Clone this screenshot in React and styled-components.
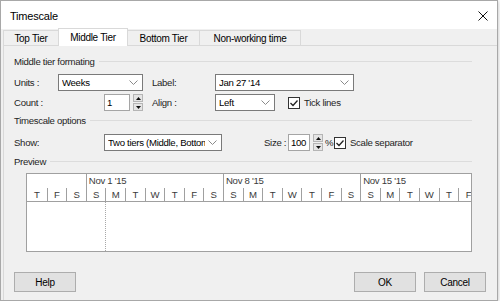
import React from 'react'
import styled, { createGlobalStyle } from 'styled-components'

const GlobalStyle = createGlobalStyle`
  html, body { margin: 0; padding: 0; background: #fff; }
  body {
    font-family: "Liberation Sans", Arial, sans-serif;
    font-size: 9.6px;
    letter-spacing: -0.3px;
    color: #1e1e1e;
  }
  * { box-sizing: border-box; }
`

const Window = styled.div`
  width: 498px;
  height: 301px;
  border: 1px solid #a8a8a8;
  background: #f0f0f0;
  box-shadow: 0 1px 4px rgba(0, 0, 0, 0.28);
  display: flex;
  flex-direction: column;
`

const TitleBar = styled.div`
  height: 28px;
  flex: 0 0 28px;
  background: #fff;
  display: flex;
  align-items: center;
  justify-content: space-between;
  padding: 1px 9px 0 9px;
  font-size: 11px;
  letter-spacing: -0.2px;
  color: #000;
`

const TabStrip = styled.div`
  height: 17px;
  flex: 0 0 17px;
  display: flex;
  align-items: flex-end;
  padding-left: 2px;
  position: relative;
  z-index: 1;
  margin-bottom: -1px;
`

const Tab = styled.div`
  width: ${p => p.$w}px;
  height: ${p => (p.$active ? 18 : 16)}px;
  margin-left: -1px;
  border: 1px solid #d9d9d9;
  border-bottom: ${p => (p.$active ? 'none' : '1px solid #d9d9d9')};
  background: ${p => (p.$active ? '#fff' : '#f0f0f0')};
  color: #000;
  font-size: 10px;
  display: flex;
  align-items: center;
  justify-content: center;
  padding-bottom: ${p => (p.$active ? 1 : 0)}px;
  &:first-child { margin-left: 0; }
`

const Panel = styled.div`
  flex: 1;
  margin-left: 2px;
  border-left: 1px solid #d9d9d9;
  border-top: 1px solid #d9d9d9;
  padding: 0 11px 0 10px;
  display: flex;
  flex-direction: column;
`

const Legend = styled.div`
  height: 12px;
  margin-top: ${p => p.$mt}px;
  margin-right: 14px;
  display: flex;
  align-items: center;
  &::after {
    content: '';
    flex: 1;
    height: 1px;
    background: #dcdcdc;
    margin-left: 4px;
  }
`

const Row = styled.div`
  height: 17px;
  margin-top: ${p => p.$mt}px;
  display: flex;
  align-items: center;
`

const FieldLabel = styled.span`
  flex: 0 0 ${p => p.$w}px;
  min-width: 0;
  padding-left: ${p => p.$pl || 0}px;
  white-space: nowrap;
`

const Gap = styled.span`
  flex: 0 0 ${p => p.$w}px;
`

const SelectBox = styled.div`
  flex: 0 0 ${p => p.$w}px;
  width: ${p => p.$w}px;
  min-width: 0;
  height: 17px;
  border: 1px solid #7a7a7a;
  background: #fff;
  display: flex;
  align-items: center;
  padding: 0 4px 0 3px;
  color: #000;
  & > svg { flex: 0 0 9px; margin-left: 3px; }
`

const SelectText = styled.span`
  flex: 1;
  min-width: 0;
  overflow: hidden;
  white-space: nowrap;
`

const NumInput = styled.div`
  flex: 0 0 ${p => p.$w}px;
  height: 17px;
  border: 1px solid #a5a5a5;
  background: #fff;
  display: flex;
  align-items: center;
  padding-left: 2px;
  color: #000;
`

const Spinner = styled.div`
  flex: 0 0 10px;
  height: 17px;
  margin-left: 3px;
  display: flex;
  flex-direction: column;
  gap: 1px;
`

const SpinButton = styled.div`
  flex: 1;
  background: #e5e5e5;
  border: 1px solid #b5b5b5;
  display: flex;
  align-items: center;
  justify-content: center;
`

const Check = styled.div`
  flex: 0 0 12px;
  height: 12px;
  border: 1px solid #333;
  background: #fff;
  display: flex;
  align-items: center;
  justify-content: center;
  margin-right: 4px;
`

const PreviewBox = styled.div`
  width: 446px;
  height: 79px;
  margin: 6px 0 0 12px;
  border: 1px solid #a0a0a0;
  background: #fff;
  overflow: hidden;
  display: flex;
  flex-direction: column;
`

const Header = styled.div`
  height: 28px;
  flex: 0 0 28px;
  border-bottom: 1px solid #a0a0a0;
  display: flex;
`

const Week = styled.div`
  flex: 0 0 ${p => p.$w}px;
  display: flex;
  flex-direction: column;
  border-left: ${p => (p.$first ? 'none' : '1px solid #a0a0a0')};
`

const WeekLabel = styled.div`
  height: 14px;
  padding: 1px 0 0 2px;
  color: #3a3a3a;
  white-space: nowrap;
`

const Days = styled.div`
  flex: 1;
  display: flex;
`

const Day = styled.div`
  flex: 0 0 19.6px;
  display: flex;
  align-items: center;
  justify-content: center;
  color: #3a3a3a;
  border-left: 1px solid #a0a0a0;
  &:first-child { border-left: none; flex-basis: ${p => (p.$inGroup ? 18.6 : 19.6)}px; }
`

const ChartBody = styled.div`
  flex: 1;
`

const TodayLine = styled.div`
  height: 100%;
  margin-left: ${p => p.$x}px;
  width: 1px;
  border-left: 1px dotted #a8a8a8;
`

const Footer = styled.div`
  margin-top: 20px;
  display: flex;
  align-items: center;
  gap: 8px;
`

const Button = styled.div`
  width: 62px;
  height: 20px;
  border: 1px solid #adadad;
  background: #e1e1e1;
  color: #000;
  font-size: 10px;
  display: flex;
  align-items: center;
  justify-content: center;
  margin-right: ${p => (p.$push ? 'auto' : '0')};
`

const Chevron = ({ color = '#8a8a8a' }) => (
  <svg width="9" height="5" viewBox="0 0 9 5">
    <polyline points="0.5,0.5 4.5,4.5 8.5,0.5" fill="none" stroke={color} strokeWidth="1" />
  </svg>
)

const Select = ({ w, children }) => (
  <SelectBox $w={w}>
    <SelectText>{children}</SelectText>
    <Chevron />
  </SelectBox>
)

const Spin = () => (
  <Spinner>
    <SpinButton>
      <svg width="5" height="3" viewBox="0 0 5 3"><polygon points="0,3 5,3 2.5,0" fill="#111" /></svg>
    </SpinButton>
    <SpinButton>
      <svg width="5" height="3" viewBox="0 0 5 3"><polygon points="0,0 5,0 2.5,3" fill="#111" /></svg>
    </SpinButton>
  </Spinner>
)

const CheckBox = () => (
  <Check>
    <svg width="10" height="10" viewBox="0 0 10 10">
      <polyline points="1.5,5 4,7.5 8.5,2.5" fill="none" stroke="#222" strokeWidth="1.3" />
    </svg>
  </Check>
)

const DAY = 19.6
const weeks = [
  { label: '', days: ['T', 'F', 'S'] },
  { label: "Nov 1 '15", days: ['S', 'M', 'T', 'W', 'T', 'F', 'S'] },
  { label: "Nov 8 '15", days: ['S', 'M', 'T', 'W', 'T', 'F', 'S'] },
  { label: "Nov 15 '15", days: ['S', 'M', 'T', 'W', 'T', 'F', 'S'] },
]

export default function App() {
  return (
    <>
      <GlobalStyle />
      <Window>
        <TitleBar>
          <span>Timescale</span>
          <svg width="10" height="10" viewBox="0 0 10 10">
            <path d="M0.5 0.5 L9.5 9.5 M9.5 0.5 L0.5 9.5" stroke="#111" strokeWidth="1" />
          </svg>
        </TitleBar>
        <TabStrip>
          <Tab $w={56}>Top Tier</Tab>
          <Tab $w={70} $active>Middle Tier</Tab>
          <Tab $w={73}>Bottom Tier</Tab>
          <Tab $w={102}>Non-working time</Tab>
        </TabStrip>
        <Panel>
          <Legend $mt={9}>Middle tier formating</Legend>
          <Row $mt={7}>
            <FieldLabel $w={44}>Units :</FieldLabel>
            <Select w={85}>Weeks</Select>
            <Gap $w={9} />
            <FieldLabel $w={63}>Label:</FieldLabel>
            <Select w={139}>Jan 27 '14</Select>
          </Row>
          <Row $mt={3}>
            <FieldLabel $w={90}>Count :</FieldLabel>
            <NumInput $w={26}>1</NumInput>
            <Spin />
            <Gap $w={9} />
            <FieldLabel $w={63}>Align :</FieldLabel>
            <Select w={60}>Left</Select>
            <Gap $w={13} />
            <CheckBox />
            <span>Tick lines</span>
          </Row>
          <Legend $mt={3}>Timescale options</Legend>
          <Row $mt={8}>
            <FieldLabel $w={90}>Show:</FieldLabel>
            <Select w={118}>Two tiers (Middle, Bottom)</Select>
            <Gap $w={42} />
            <FieldLabel $w={24}>Size :</FieldLabel>
            <NumInput $w={22}>100</NumInput>
            <Spin />
            <FieldLabel $w={11} $pl={2}>%</FieldLabel>
            <CheckBox />
            <span>Scale separator</span>
          </Row>
          <Legend $mt={4}>Preview</Legend>
          <PreviewBox>
            <Header>
              {weeks.map((wk, i) => (
                <Week key={i} $first={i === 0} $w={wk.days.length * DAY}>
                  <WeekLabel>{wk.label}</WeekLabel>
                  <Days>
                    {wk.days.map((d, j) => (
                      <Day key={j} $inGroup={i !== 0}>{d}</Day>
                    ))}
                  </Days>
                </Week>
              ))}
            </Header>
            <ChartBody>
              <TodayLine $x={DAY * 4 - 0.5} />
            </ChartBody>
          </PreviewBox>
          <Footer>
            <Button $push>Help</Button>
            <Button>OK</Button>
            <Button>Cancel</Button>
          </Footer>
        </Panel>
      </Window>
    </>
  )
}
